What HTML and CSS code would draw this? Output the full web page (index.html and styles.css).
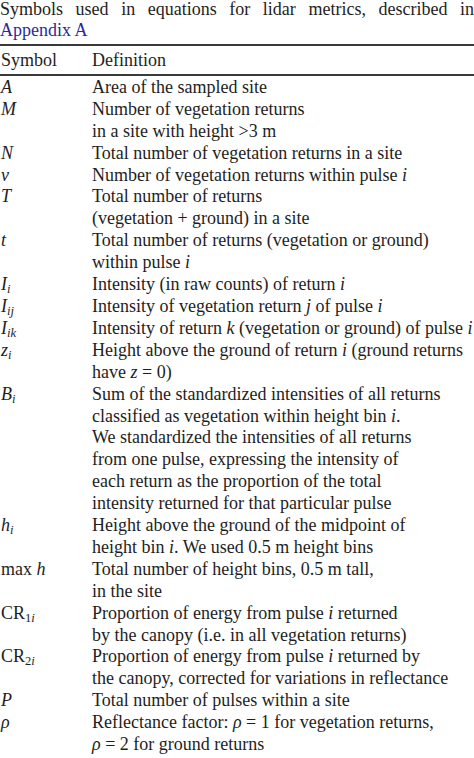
FILE: index.html
```html
<!DOCTYPE html>
<html>
<head>
<meta charset="utf-8">
<link rel="stylesheet" href="styles.css">
</head>
<body>
<div class="page">
  <p class="caption"><span class="cap-line1">Symbols used in equations for lidar metrics, described in</span><a class="link">Appendix A</a></p>
  <div class="rule"></div>
  <div class="row head"><div class="sym">Symbol</div><div class="def">Definition</div></div>
  <div class="rule"></div>
  <div class="body">
    <div class="row"><div class="sym"><i>A</i></div><div class="def">Area of the sampled site</div></div>
    <div class="row"><div class="sym"><i>M</i></div><div class="def">Number of vegetation returns<br>in a site with height &gt;3 m</div></div>
    <div class="row"><div class="sym"><i>N</i></div><div class="def">Total number of vegetation returns in a site</div></div>
    <div class="row"><div class="sym"><i>v</i></div><div class="def">Number of vegetation returns within pulse <i>i</i></div></div>
    <div class="row"><div class="sym"><i>T</i></div><div class="def">Total number of returns<br>(vegetation + ground) in a site</div></div>
    <div class="row"><div class="sym"><i>t</i></div><div class="def">Total number of returns (vegetation or ground)<br>within pulse <i>i</i></div></div>
    <div class="row"><div class="sym"><i>I<sub>i</sub></i></div><div class="def">Intensity (in raw counts) of return <i>i</i></div></div>
    <div class="row"><div class="sym"><i>I<sub>ij</sub></i></div><div class="def">Intensity of vegetation return <i>j</i> of pulse <i>i</i></div></div>
    <div class="row"><div class="sym"><i>I<sub>ik</sub></i></div><div class="def">Intensity of return <i>k</i> (vegetation or ground) of pulse <i>i</i></div></div>
    <div class="row"><div class="sym"><i>z<sub>i</sub></i></div><div class="def">Height above the ground of return <i>i</i> (ground returns<br>have <i>z</i> = 0)</div></div>
    <div class="row"><div class="sym"><i>B<sub>i</sub></i></div><div class="def">Sum of the standardized intensities of all returns<br>classified as vegetation within height bin <i>i</i>.<br>We standardized the intensities of all returns<br>from one pulse, expressing the intensity of<br>each return as the proportion of the total<br>intensity returned for that particular pulse</div></div>
    <div class="row"><div class="sym"><i>h<sub>i</sub></i></div><div class="def">Height above the ground of the midpoint of<br>height bin <i>i</i>. We used 0.5 m height bins</div></div>
    <div class="row"><div class="sym">max <i>h</i></div><div class="def">Total number of height bins, 0.5 m tall,<br>in the site</div></div>
    <div class="row"><div class="sym">CR<sub>1<i>i</i></sub></div><div class="def">Proportion of energy from pulse <i>i</i> returned<br>by the canopy (i.e. in all vegetation returns)</div></div>
    <div class="row"><div class="sym">CR<sub>2<i>i</i></sub></div><div class="def">Proportion of energy from pulse <i>i</i> returned by<br>the canopy, corrected for variations in reflectance</div></div>
    <div class="row"><div class="sym"><i>P</i></div><div class="def">Total number of pulses within a site</div></div>
    <div class="row"><div class="sym"><i>ρ</i></div><div class="def">Reflectance factor: <i>ρ</i> = 1 for vegetation returns,<br><i>ρ</i> = 2 for ground returns</div></div>
  </div>
</div>
</body>
</html>
```
FILE: styles.css
```css
html, body {
  margin: 0;
  padding: 0;
  background: #ffffff;
}
body {
  font-family: "Liberation Serif", "Times New Roman", serif;
  font-size: 18px;
  color: #1e1e1e;
  overflow: hidden;
}
.page {
  width: 474px;
  margin-top: -1px;
}
.caption {
  margin: 0;
  line-height: 21px;
  text-align: justify;
}
.cap-line1 {
  display: block;
  text-align: justify;
  text-align-last: justify;
}
.link {
  color: #2a2a9c;
  text-decoration: none;
}
.rule {
  height: 2px;
  background: #3a3a3a;
  width: 100%;
}
.caption + .rule {
  margin-top: 3px;
}
.row {
  display: grid;
  grid-template-columns: 92px 1fr;
  line-height: 21.9px;
}
.head {
  padding: 4px 0 2px 0;
}
.body {
  padding-top: 1px;
}
.sym {
  padding-left: 1px;
  white-space: nowrap;
}
.def {
  white-space: nowrap;
}
sub {
  font-size: 0.7em;
  vertical-align: -0.25em;
  line-height: 0;
}
```
